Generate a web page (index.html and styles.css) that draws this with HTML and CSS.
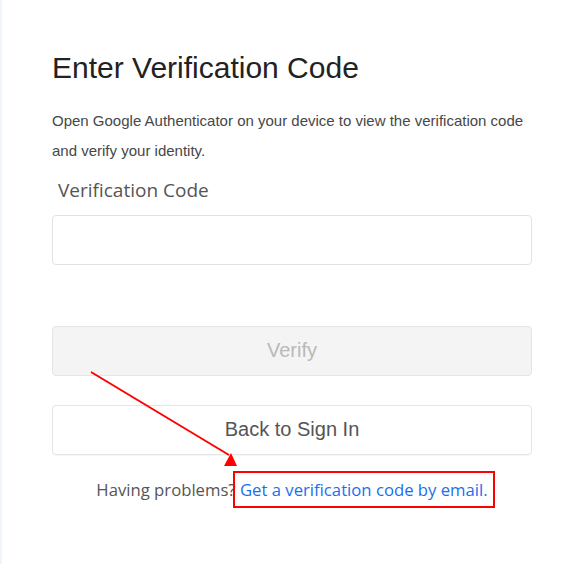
FILE: index.html
```html
<html lang="en">
<head>
    <meta charset="UTF-8">
    <meta name="viewport" content="width=device-width, initial-scale=1.0">
    <title>Enter Verification Code</title>
    <link rel="stylesheet" href="styles.css">
</head>
<body>
    <div class="container">
        <h1>Enter Verification Code</h1>
        <p class="intro">Open Google Authenticator on your device to view the verification code and verify your identity.</p>
        <label class="field-label" for="code-input">Verification Code</label>
        <input type="text" id="code-input" class="code-input">
        <button class="btn btn-verify" disabled>Verify</button>
        <button class="btn btn-back">Back to Sign In</button>
        <div class="help">Having problems? <a href="#" class="help-link">Get a verification code by email.</a></div>
    </div>

    <!-- annotation arrow drawn over the page -->
    <svg class="annotation" width="580" height="564" viewBox="0 0 580 564">
        <line x1="91" y1="372" x2="229" y2="455" stroke="#ff0000" stroke-width="2"/>
        <polygon points="231,453 237,466 224,466" fill="#ff0000"/>
    </svg>
</body>
</html>
```

FILE: styles.css
```css
body {
    margin: 0;
    padding: 0;
    background-color: #ffffff;
    border-left: 2px solid #f0f4fb;
    min-height: 564px;
    box-sizing: border-box;
    position: relative;
    font-family: "Liberation Sans", Arial, sans-serif;
}
.container {
    width: 480px;
    padding: 51px 0 0 50px;
}
h1 {
    font-size: 30px;
    line-height: 34px;
    font-weight: normal;
    color: #222222;
    margin: 0;
}
.intro {
    font-size: 15px;
    line-height: 30px;
    color: #474747;
    margin: 21px 0 0;
}
.field-label {
    display: block;
    font-family: "Open Sans", sans-serif;
    font-size: 19px;
    line-height: 24px;
    color: #555555;
    margin: 12px 0 0;
    padding-left: 6px;
}
.code-input {
    display: block;
    box-sizing: border-box;
    width: 480px;
    height: 50px;
    margin: 13px 0 0;
    border: 1px solid #e2e2e2;
    border-radius: 4px;
    font-size: 18px;
    padding: 0 12px;
    outline: none;
}
.btn {
    display: block;
    box-sizing: border-box;
    width: 480px;
    height: 50px;
    border: 1px solid #e5e5e5;
    border-radius: 4px;
    font-family: "Liberation Sans", Arial, sans-serif;
    font-size: 20px;
    padding: 0 0 2px;
    cursor: pointer;
}
.btn-verify {
    margin-top: 61px;
    background-color: #f4f4f4;
    color: #b9b9b9;
}
.btn-back {
    margin-top: 29px;
    background-color: #ffffff;
    color: #555555;
    box-shadow: 0 1px 1px rgba(0, 0, 0, 0.04);
}
.help {
    margin-top: 23px;
    text-align: center;
    font-family: "Open Sans", sans-serif;
    font-size: 16.7px;
    line-height: 24px;
    color: #555555;
}
.help-link {
    color: #1a6ff0;
    text-decoration: none;
    outline: 2px solid #ff0000;
    outline-offset: 5px;
}
.annotation {
    position: absolute;
    top: 0;
    left: -2px;
    pointer-events: none;
}
```
